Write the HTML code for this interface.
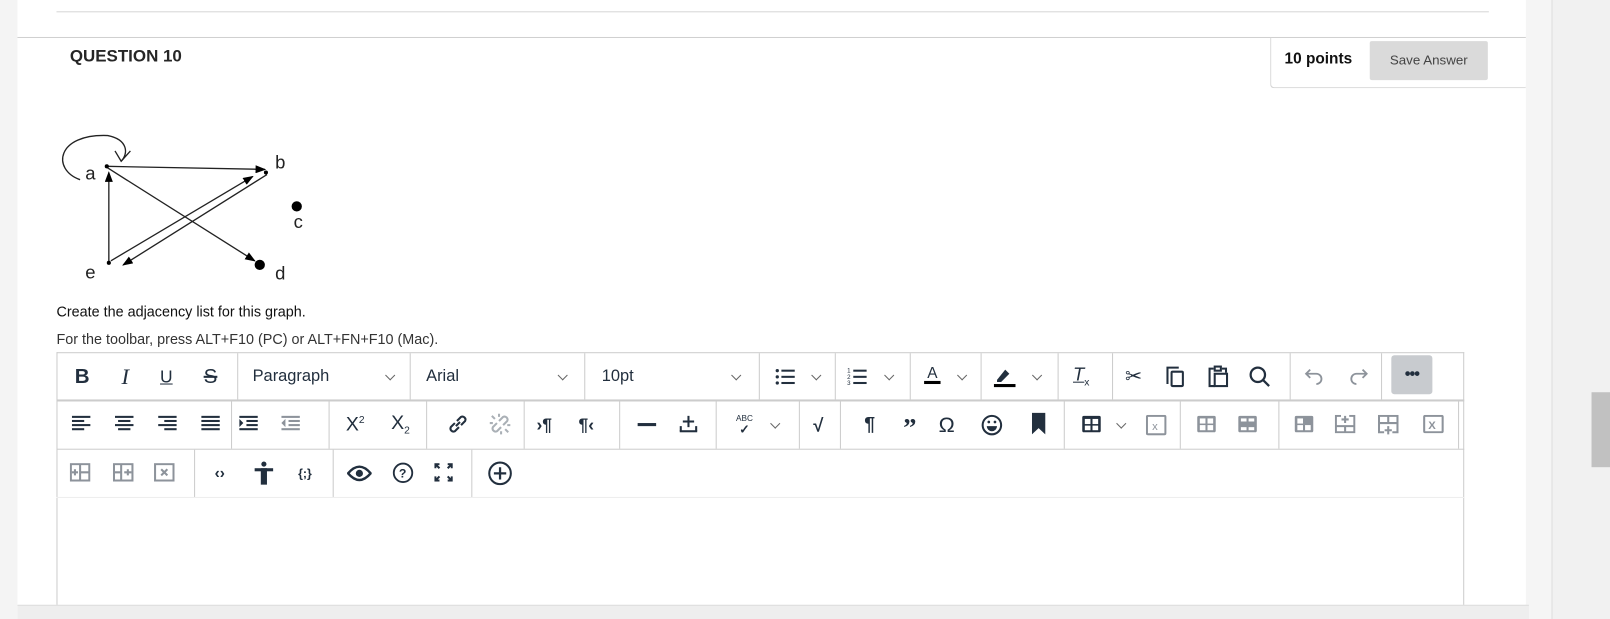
<!DOCTYPE html>
<html><head><meta charset="utf-8"><style>
*{margin:0;padding:0;box-sizing:border-box}
html,body{width:1610px;height:619px;overflow:hidden;background:#f5f5f5;font-family:"Liberation Sans",sans-serif}
#w{position:absolute;left:0;top:0;width:1568px;height:603px;transform:scale(1.0268);transform-origin:0 0}
.a{position:absolute}
.i{position:absolute;transform:translate(-50%,-50%);color:#222f3e;font-size:18px;line-height:1;white-space:nowrap}
.g{color:#8d939b}
.chev{position:absolute;width:7px;height:7px;border-right:1.3px solid #666;border-bottom:1.3px solid #666;transform:translate(-50%,-70%) rotate(45deg)}
.vs{position:absolute;width:1px;background:#ccc}
</style></head><body><div id="w">
<div class="a" style="left:0;top:0;width:17px;height:603px;background:#f4f4f4"></div>
<div class="a" style="left:17px;top:0;width:1469px;height:603px;background:#fff"></div>
<div class="a" style="left:1511px;top:0;width:1px;height:603px;background:#ddd"></div>
<div class="a" style="left:1512px;top:0;width:56px;height:603px;background:#f1f1f1"></div>
<div class="a" style="left:1550px;top:382px;width:18px;height:73px;background:#c1c1c1"></div>
<div class="a" style="left:55px;top:11px;width:1395px;height:1px;background:#d6d6d6"></div>
<div class="a" style="left:17px;top:36px;width:1469px;height:1px;background:#d0d0d0"></div>
<div class="a" style="left:68px;top:46px;font-weight:bold;font-size:16.5px;color:#262626">QUESTION 10</div>
<div class="a" style="left:1237px;top:36px;width:249px;height:50px;border:1px solid #d4d4d4;border-top:none;border-right:none;border-radius:0 0 0 4px"></div>
<div class="a" style="left:1251px;top:49px;font-weight:bold;font-size:15px;color:#111">10 points</div>
<div class="a" style="left:1334px;top:40px;width:115px;height:38px;background:#dadada;border-radius:2px;font-size:13px;color:#444;text-align:center;line-height:38px">Save Answer</div>

<svg class="a" style="left:0;top:0" width="320" height="290" viewBox="0 0 320 290">
<defs><marker id="ar" markerWidth="8" markerHeight="6" refX="7" refY="3" orient="auto"><path d="M0,0L8,3L0,6z" fill="#000"/></marker></defs>
<g stroke="#222" stroke-width="1.3" fill="none">
<path d="M78,175 C50,165 55,130 105,132 C125,136 125,150 118,157"/>
<path d="M112,147 L118,157 L127,147"/>
<line x1="104" y1="162" x2="258" y2="165" marker-end="url(#ar)"/>
<line x1="104" y1="163" x2="248" y2="254" marker-end="url(#ar)"/>
<line x1="106" y1="256" x2="106" y2="168" marker-end="url(#ar)"/>
<line x1="108" y1="254" x2="246" y2="172" marker-end="url(#ar)"/>
<line x1="260" y1="170" x2="120" y2="258" marker-end="url(#ar)"/>
</g>
<circle cx="104" cy="162" r="2" fill="#000"/><circle cx="259" cy="168" r="2" fill="#000"/>
<circle cx="106" cy="256" r="2" fill="#000"/><circle cx="289" cy="201" r="5" fill="#000"/>
<circle cx="253" cy="258" r="5" fill="#000"/>
<g font-family="Liberation Sans" font-size="18" fill="#222">
<text x="83" y="175">a</text><text x="268" y="164">b</text><text x="286" y="222">c</text><text x="83" y="271">e</text><text x="268" y="272">d</text></g>
</svg>

<div class="a" style="left:55px;top:295px;font-size:14px;color:#111">Create the adjacency list for this graph.</div>
<div class="a" style="left:55px;top:322px;font-size:14px;color:#333">For the toolbar, press ALT+F10 (PC) or ALT+FN+F10 (Mac).</div>

<div class="a" style="left:55px;top:343px;width:1371px;height:247px;border:1px solid #ccc;border-bottom:none"></div>
<div class="a" style="left:55px;top:389px;width:1371px;height:2px;background:#ccc"></div>
<div class="a" style="left:55px;top:437px;width:1371px;height:1px;background:#ccc"></div>
<div class="a" style="left:55px;top:484px;width:1371px;height:1px;background:#eee"></div>
<div class="a" style="left:17px;top:589px;width:1472px;height:14px;background:#eee;border-top:1px solid #ddd"></div>

<div class="vs" style="left:231px;top:344px;height:45px"></div>
<div class="vs" style="left:399px;top:344px;height:45px"></div>
<div class="vs" style="left:569px;top:344px;height:45px"></div>
<div class="vs" style="left:739px;top:344px;height:45px"></div>
<div class="vs" style="left:813px;top:344px;height:45px"></div>
<div class="vs" style="left:886px;top:344px;height:45px"></div>
<div class="vs" style="left:955px;top:344px;height:45px"></div>
<div class="vs" style="left:1030px;top:344px;height:45px"></div>
<div class="vs" style="left:1083px;top:344px;height:45px"></div>
<div class="vs" style="left:1256px;top:344px;height:45px"></div>
<div class="vs" style="left:1345px;top:344px;height:45px"></div>
<div class="vs" style="left:225px;top:391px;height:46px"></div>
<div class="vs" style="left:320px;top:391px;height:46px"></div>
<div class="vs" style="left:415px;top:391px;height:46px"></div>
<div class="vs" style="left:510px;top:391px;height:46px"></div>
<div class="vs" style="left:603px;top:391px;height:46px"></div>
<div class="vs" style="left:697px;top:391px;height:46px"></div>
<div class="vs" style="left:778px;top:391px;height:46px"></div>
<div class="vs" style="left:818px;top:391px;height:46px"></div>
<div class="vs" style="left:1036px;top:391px;height:46px"></div>
<div class="vs" style="left:1149px;top:391px;height:46px"></div>
<div class="vs" style="left:1245px;top:391px;height:46px"></div>
<div class="vs" style="left:1420px;top:391px;height:46px"></div>
<div class="vs" style="left:189px;top:438px;height:46px"></div>
<div class="vs" style="left:324px;top:438px;height:46px"></div>
<div class="vs" style="left:459px;top:438px;height:46px"></div>

<span class="i" style="left:80px;top:367px;font-weight:bold;font-size:20px">B</span>
<span class="i" style="left:122px;top:367px;font-style:italic;font-family:'Liberation Serif';font-size:22px">I</span>
<span class="i" style="left:162px;top:367px;font-size:17px;text-decoration:underline">U</span>
<span class="i" style="left:205px;top:367px;font-size:20px;text-decoration:line-through">S</span>
<span class="a" style="left:246px;top:358px;font-size:16px;color:#222f3e">Paragraph</span><span class="chev" style="left:380px;top:367px"></span>
<span class="a" style="left:415px;top:358px;font-size:16px;color:#222f3e">Arial</span><span class="chev" style="left:548px;top:367px"></span>
<span class="a" style="left:586px;top:358px;font-size:16px;color:#222f3e">10pt</span><span class="chev" style="left:717px;top:367px"></span>
<svg class="a" style="left:755px;top:358px" width="20" height="18"><g fill="#222f3e"><circle cx="2" cy="3" r="1.6"/><circle cx="2" cy="9" r="1.6"/><circle cx="2" cy="15" r="1.6"/><rect x="6" y="2" width="13" height="2"/><rect x="6" y="8" width="13" height="2"/><rect x="6" y="14" width="13" height="2"/></g></svg><span class="chev" style="left:795px;top:367px"></span>
<svg class="a" style="left:825px;top:358px" width="20" height="18"><g fill="#222f3e"><rect x="6" y="2" width="13" height="2"/><rect x="6" y="8" width="13" height="2"/><rect x="6" y="14" width="13" height="2"/></g><g font-size="6" fill="#222f3e"><text x="0" y="5">1</text><text x="0" y="11">2</text><text x="0" y="17">3</text></g></svg><span class="chev" style="left:866px;top:367px"></span>
<span class="i" style="left:908px;top:365px;font-size:15px;border-bottom:3px solid #000;padding:0 3px">A</span><span class="chev" style="left:937px;top:367px"></span>
<svg class="a" style="left:967px;top:356px" width="22" height="22"><path d="M4,14 L12,4 L16,8 L8,16 L4,16z" fill="#222f3e"/><rect x="1" y="18" width="21" height="3" fill="#000"/></svg><span class="chev" style="left:1010px;top:367px"></span>
<span class="i" style="left:1053px;top:367px;font-style:italic;font-size:18px;text-decoration:underline">T<sub style="font-size:10px;font-style:normal">x</sub></span>
<span class="i" style="left:1104px;top:367px;font-size:20px">✂</span>
<svg class="a" style="left:1135px;top:356px" width="20" height="22"><g fill="none" stroke="#222f3e" stroke-width="2"><path d="M2,18 V2 H13"/><rect x="6" y="6" width="11" height="14" rx="1"/></g></svg>
<svg class="a" style="left:1176px;top:355px" width="22" height="24"><g fill="none" stroke="#222f3e" stroke-width="2"><path d="M6,4 H2 V21 H7"/><path d="M14,4 H18 V8"/><rect x="7" y="9" width="12" height="12"/><rect x="7" y="2" width="6" height="4"/></g></svg>
<svg class="a" style="left:1216px;top:356px" width="22" height="22"><g fill="none" stroke="#222f3e" stroke-width="2.2"><circle cx="9" cy="9" r="7"/><path d="M14,14 L20,20"/></g></svg>
<svg class="a" style="left:1270px;top:358px" width="20" height="18"><path d="M6,2 L2,6 L6,10 M2,6 H12 A5,5 0 0 1 12,16" fill="none" stroke="#8d939b" stroke-width="1.8"/></svg>
<svg class="a" style="left:1313px;top:358px" width="20" height="18"><path d="M14,2 L18,6 L14,10 M18,6 H8 A5,5 0 0 0 8,16" fill="none" stroke="#8d939b" stroke-width="1.8"/></svg>
<div class="a" style="left:1355px;top:346px;width:40px;height:38px;background:#c8cbcf;border-radius:3px"></div>
<span class="i" style="left:1375px;top:365px;font-size:16px;font-weight:bold;letter-spacing:-1px">•••</span>

<svg class="a" style="left:70px;top:404px" width="20" height="16"><g fill="#222f3e"><rect y="1" width="18" height="2"/><rect y="5" width="12" height="2"/><rect y="9" width="18" height="2"/><rect y="13" width="12" height="2"/></g></svg>
<svg class="a" style="left:112px;top:404px" width="20" height="16"><g fill="#222f3e"><rect y="1" width="18" height="2"/><rect x="3" y="5" width="12" height="2"/><rect y="9" width="18" height="2"/><rect x="3" y="13" width="12" height="2"/></g></svg>
<svg class="a" style="left:154px;top:404px" width="20" height="16"><g fill="#222f3e"><rect y="1" width="18" height="2"/><rect x="6" y="5" width="12" height="2"/><rect y="9" width="18" height="2"/><rect x="6" y="13" width="12" height="2"/></g></svg>
<svg class="a" style="left:196px;top:404px" width="20" height="16"><g fill="#222f3e"><rect y="1" width="18" height="2"/><rect y="5" width="18" height="2"/><rect y="9" width="18" height="2"/><rect y="13" width="18" height="2"/></g></svg>
<svg class="a" style="left:233px;top:404px" width="20" height="16"><g fill="#222f3e"><rect y="1" width="18" height="2"/><rect x="7" y="5" width="11" height="2"/><rect x="7" y="9" width="11" height="2"/><rect y="13" width="18" height="2"/><path d="M0,4 L4,8 L0,12z"/></g></svg>
<svg class="a" style="left:274px;top:404px" width="20" height="16"><g fill="#8d939b"><rect y="1" width="18" height="2"/><rect x="7" y="5" width="11" height="2"/><rect x="7" y="9" width="11" height="2"/><rect y="13" width="18" height="2"/><path d="M4,4 L0,8 L4,12z"/></g></svg>
<span class="i" style="left:346px;top:414px;font-size:19px">X<sup style="font-size:10px">2</sup></span>
<span class="i" style="left:390px;top:414px;font-size:19px">X<sub style="font-size:10px">2</sub></span>
<svg class="a" style="left:435px;top:402px" width="22" height="22"><g fill="none" stroke="#222f3e" stroke-width="2"><path d="M9,13 L13,9"/><path d="M8,10 L4,14 A3,3 0 0 0 8,18 L12,14"/><path d="M10,8 L14,4 A3,3 0 0 1 18,8 L14,12"/></g></svg>
<svg class="a" style="left:476px;top:402px" width="22" height="22"><g fill="none" stroke="#aab0b6" stroke-width="2"><path d="M8,10 L4,14 A3,3 0 0 0 8,18 L12,14"/><path d="M10,8 L14,4 A3,3 0 0 1 18,8 L14,12"/><path d="M3,3 L6,6 M19,19 L16,16 M10,1 V4 M1,10 H4 M12,21 V18 M21,12 H18"/></g></svg>
<span class="i" style="left:530px;top:414px;font-size:17px;font-weight:bold">›¶</span>
<span class="i" style="left:571px;top:414px;font-size:17px;font-weight:bold">¶‹</span>
<div class="a" style="left:621px;top:412px;width:18px;height:2.5px;background:#222f3e"></div>
<svg class="a" style="left:661px;top:403px" width="20" height="20"><g fill="#222f3e"><rect x="8.5" y="2" width="2" height="11"/><rect x="4" y="6.5" width="11" height="2"/><rect x="1" y="16" width="17" height="2"/><rect x="1" y="12" width="2" height="5"/><rect x="16" y="12" width="2" height="5"/></g></svg>
<span class="i" style="left:725px;top:408px;font-size:8px">ABC</span><span class="i" style="left:725px;top:418px;font-size:12px;font-weight:bold">✓</span><span class="chev" style="left:755px;top:414px"></span>
<span class="i" style="left:797px;top:414px;font-size:18px;font-weight:bold">√</span>
<span class="i" style="left:847px;top:414px;font-size:19px;font-weight:bold">¶</span>
<span class="i" style="left:886px;top:417px;font-size:26px;font-weight:bold;font-family:'Liberation Serif'">”</span>
<span class="i" style="left:922px;top:414px;font-size:21px">Ω</span>
<svg class="a" style="left:955px;top:403px" width="22" height="22"><circle cx="11" cy="11" r="9" fill="none" stroke="#222f3e" stroke-width="2"/><circle cx="8" cy="8" r="1.3" fill="#222f3e"/><circle cx="14" cy="8" r="1.3" fill="#222f3e"/><path d="M6,12 H16 A5,5 0 0 1 6,12z" fill="#222f3e"/></svg>
<svg class="a" style="left:1005px;top:402px" width="14" height="22"><path d="M0,0 H13 V21 L6.5,15 L0,21z" fill="#222f3e"/></svg>
<svg class="a" style="left:1053px;top:404px" width="20" height="18"><rect x="1" y="1" width="18" height="16" rx="1.5" fill="#222f3e"/><g fill="#fff"><rect x="3.5" y="4" width="5.5" height="5"/><rect x="11" y="4" width="5.5" height="5"/><rect x="3.5" y="10.5" width="5.5" height="4.5"/><rect x="11" y="10.5" width="5.5" height="4.5"/></g></svg><span class="chev" style="left:1092px;top:414px"></span>
<svg class="a" style="left:1116px;top:404px" width="20" height="20"><rect x="1" y="1" width="18" height="18" rx="1" fill="none" stroke="#8d939b" stroke-width="2"/><text x="6" y="15" font-size="11" fill="#8d939b">x</text></svg>
<svg class="a" style="left:1165px;top:404px" width="20" height="18"><rect x="1" y="1" width="18" height="16" rx="1.5" fill="#8d939b"/><g fill="#fff"><rect x="3.5" y="3.5" width="5.5" height="5"/><rect x="11" y="3.5" width="5.5" height="5"/><rect x="3.5" y="10" width="5.5" height="5"/><rect x="11" y="10" width="5.5" height="5"/></g></svg>
<svg class="a" style="left:1205px;top:404px" width="20" height="18"><rect x="1" y="1" width="18" height="16" rx="1.5" fill="#8d939b"/><g fill="#fff"><rect x="3.5" y="3.5" width="5.5" height="3"/><rect x="11" y="3.5" width="5.5" height="3"/><rect x="3.5" y="12" width="5.5" height="3"/><rect x="11" y="12" width="5.5" height="3"/></g></svg>
<svg class="a" style="left:1260px;top:404px" width="20" height="18"><rect x="1" y="1" width="18" height="16" rx="1.5" fill="#8d939b"/><g fill="#fff"><rect x="3.5" y="3.5" width="5.5" height="5"/><rect x="3.5" y="10" width="5.5" height="5"/><rect x="11" y="10" width="5.5" height="5"/></g></svg>
<svg class="a" style="left:1300px;top:404px" width="20" height="18"><g fill="none" stroke="#8d939b" stroke-width="2"><path d="M6,1 H1 V17 H19 V1 H14"/><path d="M10,1 V8 M6.5,4.5 H13.5 M1,11 H19 M10,11 V17"/></g></svg>
<svg class="a" style="left:1342px;top:404px" width="20" height="20"><g fill="none" stroke="#8d939b" stroke-width="2"><path d="M6,17 H1 V1 H19 V17 H14"/><path d="M1,8 H19 M10,1 V8 M10,11 V19 M6.5,15 H13.5"/></g></svg>
<svg class="a" style="left:1385px;top:404px" width="22" height="18"><g fill="none" stroke="#8d939b" stroke-width="2"><rect x="2" y="1" width="18" height="16" rx="1"/></g><text x="6" y="14" font-size="11" fill="#8d939b" font-weight="bold">X</text></svg>

<svg class="a" style="left:68px;top:451px" width="20" height="18"><g fill="none" stroke="#8d939b" stroke-width="2"><rect x="1" y="1" width="18" height="16"/><path d="M10,1 V17 M10,9 H19"/><path d="M2,9 H8 M5,6 V12"/></g></svg>
<svg class="a" style="left:110px;top:451px" width="20" height="18"><g fill="none" stroke="#8d939b" stroke-width="2"><rect x="1" y="1" width="18" height="16"/><path d="M8,1 V17 M1,9 H8"/><path d="M11,9 H18 M14.5,6 V12"/></g></svg>
<svg class="a" style="left:150px;top:451px" width="20" height="18"><g fill="none" stroke="#8d939b" stroke-width="2"><rect x="1" y="1" width="18" height="16"/><path d="M7,6 L13,12 M13,6 L7,12"/></g></svg>
<span class="i" style="left:214px;top:461px;font-size:15px;font-weight:bold">‹›</span>
<svg class="a" style="left:247px;top:449px" width="20" height="24"><g fill="#222f3e"><circle cx="10" cy="3" r="2.5"/><rect x="1" y="7" width="18" height="3"/><rect x="7" y="7" width="6" height="16"/></g></svg>
<span class="i" style="left:297px;top:461px;font-size:12px;font-weight:bold">{;}</span>
<svg class="a" style="left:338px;top:452px" width="24" height="18"><path d="M1,9 Q12,-4 23,9 Q12,22 1,9z" fill="none" stroke="#222f3e" stroke-width="2.4"/><circle cx="12" cy="9" r="3.5" fill="#222f3e"/></svg>
<svg class="a" style="left:382px;top:450px" width="21" height="21"><circle cx="10.5" cy="10.5" r="9" fill="none" stroke="#222f3e" stroke-width="1.8"/><text x="6.5" y="15" font-size="12" font-weight="bold" fill="#222f3e">?</text></svg>
<svg class="a" style="left:423px;top:451px" width="18" height="18"><g fill="none" stroke="#222f3e" stroke-width="2"><path d="M1,5 V1 H5 M1,1 L5,5 M13,1 H17 V5 M17,1 L13,5 M1,13 V17 H5 M1,17 L5,13 M17,13 V17 H13 M17,17 L13,13"/></g></svg>
<svg class="a" style="left:475px;top:449px" width="24" height="24"><circle cx="12" cy="12" r="10.5" fill="none" stroke="#222f3e" stroke-width="2"/><path d="M12,6 V18 M6,12 H18" stroke="#222f3e" stroke-width="2.2"/></svg>
</div></body></html>
